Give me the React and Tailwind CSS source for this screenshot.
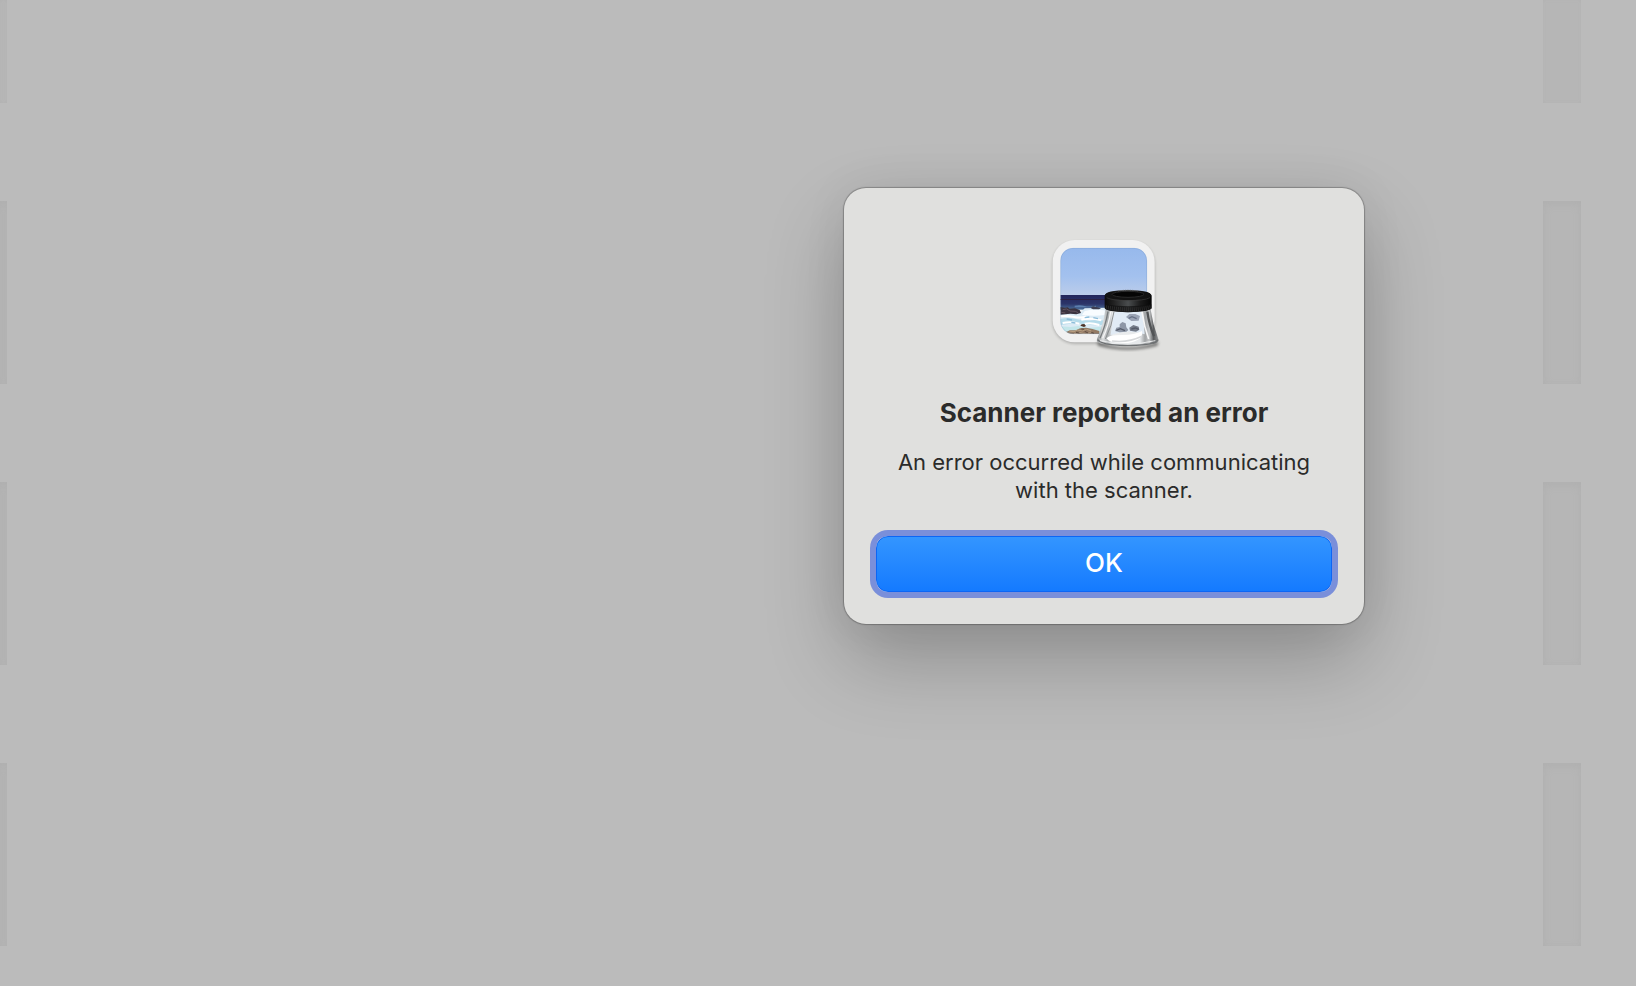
import React from "react"

function ScannerIcon() {
  return (
    <svg width="140" height="140" viewBox="-2 -1 420 420" aria-hidden="true">
      <defs>
        <linearGradient id="sky" x1="0" y1="0" x2="0" y2="1">
          <stop offset="0" stopColor="#97b9ec" />
          <stop offset="0.6" stopColor="#a3c1ee" />
          <stop offset="1" stopColor="#bccdea" />
        </linearGradient>
        <linearGradient id="sea" x1="0" y1="0" x2="0" y2="1">
          <stop offset="0" stopColor="#23265c" />
          <stop offset="0.6" stopColor="#2b3468" />
          <stop offset="1" stopColor="#4a6f9a" />
        </linearGradient>
        <linearGradient id="lid" x1="0" y1="0" x2="1" y2="0">
          <stop offset="0" stopColor="#0a0a0a" />
          <stop offset="0.2" stopColor="#222" />
          <stop offset="0.5" stopColor="#4a4d4e" />
          <stop offset="0.75" stopColor="#1c1c1c" />
          <stop offset="1" stopColor="#050505" />
        </linearGradient>
        <linearGradient id="glass" x1="0" y1="0" x2="1" y2="0">
          <stop offset="0" stopColor="#8d9194" />
          <stop offset="0.1" stopColor="#dcdedf" />
          <stop offset="0.18" stopColor="#a8acae" />
          <stop offset="0.26" stopColor="#eceeef" />
          <stop offset="0.7" stopColor="#e6e9eb" />
          <stop offset="0.78" stopColor="#a0a3a5" />
          <stop offset="0.85" stopColor="#c5c7c8" />
          <stop offset="0.92" stopColor="#57595b" />
          <stop offset="1" stopColor="#9b9d9e" />
        </linearGradient>
        <clipPath id="photo">
          <rect x="77" y="71" width="260" height="258" rx="38" />
        </clipPath>
        <filter id="soft" x="-20%" y="-20%" width="140%" height="140%">
          <feGaussianBlur stdDeviation="5" />
        </filter>
        <filter id="spray" x="-10%" y="-10%" width="120%" height="120%">
          <feGaussianBlur stdDeviation="2" />
        </filter>
      </defs>

      {/* photo frame */}
      <rect x="54" y="52" width="306" height="306" rx="66" fill="#000" opacity="0.24" filter="url(#soft)" />
      <rect x="54" y="47" width="306" height="307" rx="66" fill="#f1f1f1" />
      <g clipPath="url(#photo)">
        <rect x="77" y="71" width="260" height="142" fill="url(#sky)" />
        <rect x="77" y="212" width="260" height="44" fill="url(#sea)" />
        <rect x="77" y="224" width="260" height="3" fill="#2b2244" />
        <g filter="url(#spray)">
          <path d="M77 270 L140 262 L150 252 L214 250 L340 248 V332 H77z" fill="#dcebf5" />
          <path d="M120 244 q16 -3 30 1 t34 -1 v5 h-64z" fill="#5b7fae" />
          <path d="M77 284 q22 -6 46 0 t50 4 t40 2 v10 q-30 6 -60 0 t-76 2z" fill="#b5dbea" />
          <path d="M150 260 q24 -6 60 -2 v14 q-30 4 -68 0z" fill="#f8fcff" />
          <path d="M77 276 q20 -2 42 2 t36 -2 M140 286 q26 -6 60 2 M84 296 q24 -6 50 2 M150 298 q20 -4 44 4" fill="none" stroke="#fff" strokeWidth="6" />
          <path d="M96 284 l16 3 M150 280 l14 -2 M176 280 l14 3 M110 294 l12 2" fill="none" stroke="#8dbdda" strokeWidth="4" />
          <path d="M77 306 l30 2 24 -3 30 6 38 -4 v24 h-122z" fill="#c3e6ea" />
        </g>
        <path d="M77 248 l14 2 8 -1 6 4 16 -1 14 5 4 9 -14 4 -18 -2 -30 3z" fill="#3a3340" />
        <path d="M84 256 l12 -2 10 6 16 1 8 4 M80 264 l12 2" fill="none" stroke="#62535f" strokeWidth="3" />
        <path d="M168 251 l7 -5 10 2 14 4 -6 3 -18 0z" fill="#3c3d50" />
        <path d="M137 304 l4 -4 8 -1 5 6 -6 3z" fill="#4e3428" />
        <path d="M92 324 l14 -6 18 0 12 -6 18 -2 20 4 20 6 v16 h-102z" fill="#937a64" />
        <path d="M104 320 l14 2 10 -5 16 3 12 -5 14 5 M118 328 l18 -3 18 4 14 -4" fill="none" stroke="#b9a083" strokeWidth="3" />
        <path d="M124 324 l10 2 M150 321 l10 5 M170 324 l8 3 M140 314 l8 1" fill="none" stroke="#5c4b40" strokeWidth="3" />
      </g>
      <rect x="78" y="72" width="258" height="256" rx="37" fill="none" stroke="#6f8fc0" strokeOpacity="0.4" strokeWidth="2" />

      {/* loupe */}
      <path d="M188 352 q90 34 184 0 l-4 12 q-90 24 -178 0z" fill="#000" opacity="0.5" filter="url(#soft)" />
      <path d="M212 256 L348 256 Q354 300 371 344 Q374 352 364 357 Q280 374 196 357 Q184 352 187 344 Q206 300 212 256z" fill="url(#glass)" />
      <path d="M238 262 H324 L330 330 Q280 312 228 332z" fill="#e1ebf5" />
      <g filter="url(#spray)">
        <path d="M274 278 l10 -9 18 0 14 6 -4 14 -22 1z" fill="#9aa3b4" />
        <path d="M282 282 l10 -5 14 6" fill="none" stroke="#667085" strokeWidth="4" />
        <path d="M255 300 l8 -7 10 4 2 12 6 8 -6 5 -20 2 -14 -4 4 -10 10 -2z" fill="#8e97a6" />
        <path d="M284 310 l12 -8 16 5 2 9 -10 6 -18 -3z" fill="#747b89" />
        <path d="M245 318 l12 -5 14 6 M290 314 l12 -3 10 4" fill="none" stroke="#555b69" strokeWidth="4" />
      </g>
      <path d="M216 342 Q222 332 262 332 Q300 332 322 320 Q328 348 280 356 Q222 358 216 342z" fill="#fff" />
      <path d="M232 350 Q280 356 322 336" fill="none" stroke="#d6d8da" strokeWidth="5" />
      <path d="M238 262 Q232 306 212 344" fill="none" stroke="#8b8e90" strokeWidth="3" />
      <path d="M220 262 Q212 306 196 342" fill="none" stroke="#777b7d" strokeWidth="4" />
      <path d="M228 262 Q222 304 204 342" fill="none" stroke="#f4f4f4" strokeWidth="4" />
      <path d="M322 262 Q328 306 342 344" fill="none" stroke="#f7f7f7" strokeWidth="5" />
      <path d="M338 262 Q344 304 358 336" fill="none" stroke="#515355" strokeWidth="7" />
      <path d="M189 346 Q196 357 230 361 Q280 366 330 361 Q364 357 370 346" fill="none" stroke="#6e7173" strokeWidth="4" />
      <path d="M196 349 Q280 368 362 349" fill="none" stroke="#e9ebec" strokeWidth="3" />
      <path d="M210 214 Q212 198 280 197 Q348 198 351 214 V252 Q346 262 280 264 Q214 262 210 252z" fill="url(#lid)" />
      <path d="M211 240 Q280 252 350 240 V252 Q346 262 280 264 Q214 262 211 252z" fill="#111" opacity="0.75" />
      <path d="M214 249 Q280 261 347 249" fill="none" stroke="#555" strokeWidth="12" strokeDasharray="2 4" opacity="0.45" />
      <ellipse cx="280" cy="213" rx="69" ry="14" fill="#121212" />
      <ellipse cx="280" cy="210" rx="48" ry="9" fill="#050505" stroke="#2a2a2a" strokeWidth="3" />
      <path d="M250 200 Q280 195 310 200" fill="none" stroke="#6a6a6a" strokeWidth="2" strokeDasharray="4 3" />
      <path d="M216 220 Q234 229 280 229 Q328 229 346 220" fill="none" stroke="#3a3a3a" strokeWidth="2" />
    </svg>
  )
}

function Slots({ className }) {
  const slot =
    "h-[183px] bg-[#b6b6b6] shadow-[inset_0_3px_8px_#b0b0b0,inset_0_0_3px_#b2b2b2]"

  return (
    <div className={className}>
      <div className="h-[103px] bg-[#b6b6b6] shadow-[inset_0_0_3px_#b2b2b2]" />
      <div className={slot} />
      <div className={slot} />
      <div className={slot} />
    </div>
  )
}

export default function App() {
  return (
    <div className="flex min-h-screen bg-[#bbbbbb] font-[Inter,sans-serif] text-[#2b2b2a]">
      <Slots className="flex w-[7px] shrink-0 flex-col gap-[98px]" />

      <main className="flex flex-1 items-start justify-end pt-[188px] pr-[179px]">
        <div
          role="alertdialog"
          aria-labelledby="alert-title"
          aria-describedby="alert-message"
          className="flex w-[520px] flex-col items-center rounded-[22px] bg-[#e0e0de] px-8 pt-9 pb-8 shadow-[0_0_1px_1px_rgba(0,0,0,0.25),0_36px_80px_rgba(0,0,0,0.24),0_0_48px_rgba(0,0,0,0.06)]"
        >
          <ScannerIcon />
          <h1
            id="alert-title"
            className="mt-8 text-[26px] leading-[34px] font-bold"
          >
            Scanner reported an error
          </h1>
          <p
            id="alert-message"
            className="mt-[18px] text-center text-[22px] leading-7"
          >
            An error occurred while communicating with the scanner.
          </p>
          <button
            type="button"
            className="mt-8 h-14 w-full rounded-xl border border-[#0c66f5] bg-linear-to-b from-[#3395ff] to-[#147aff] pb-1 text-[26px] font-medium text-white ring-6 ring-[#7a8fda]"
          >
            OK
          </button>
        </div>
      </main>

      <Slots className="mr-[55px] flex w-[38px] shrink-0 flex-col gap-[98px]" />
    </div>
  )
}
